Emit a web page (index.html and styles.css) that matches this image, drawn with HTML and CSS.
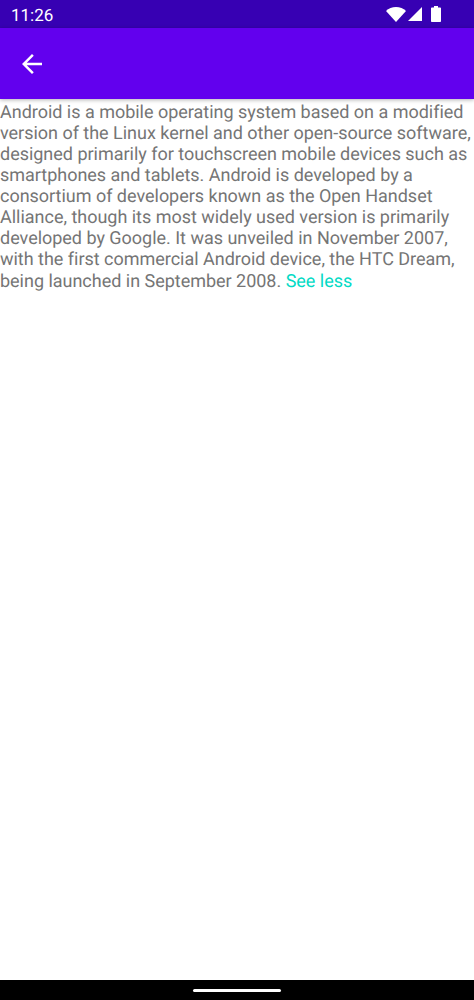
FILE: index.html
```html
<!DOCTYPE html>
<html lang="en">

<head>
    <meta charset="UTF-8">
    <meta name="viewport" content="width=device-width, initial-scale=1.0">
    <title>Read More</title>
    <link rel="stylesheet" href="styles.css">
</head>

<body>
    <div class="status-bar">
        <span class="time">11:26</span>
        <div class="status-icons">
            <svg class="wifi" width="20" height="15" viewBox="0 0 20 15"><path d="M0 4C2.6 1.5 6.1 0 10 0s7.4 1.5 10 4L10 15z" fill="#fff"/></svg>
            <svg class="signal" width="14" height="14" viewBox="0 0 14 14"><path d="M14 0V14H0z" fill="#fff"/></svg>
            <svg class="battery" width="10" height="16" viewBox="0 0 10 16"><path d="M3 0h4v1.5h2.2c.5 0 .8.3.8.8V15.2c0 .5-.3.8-.8.8H.8c-.5 0-.8-.3-.8-.8V2.3c0-.5.3-.8.8-.8H3z" fill="#fff"/></svg>
        </div>
    </div>
    <div class="toolbar">
        <svg class="back" width="30" height="30" viewBox="0 0 24 24"><path d="M20 11H7.8l5.6-5.6L12 4l-8 8 8 8 1.4-1.4L7.8 13H20z" fill="#fff"/></svg>
    </div>
    <div class="content">
        <p class="description">Android is a mobile operating system based on a modified version of the Linux kernel and other open-source software, designed primarily for touchscreen mobile devices such as smartphones and tablets. Android is developed by a consortium of developers known as the Open Handset Alliance, though its most widely used version is primarily developed by Google. It was unveiled in November 2007, with the first commercial Android device, the HTC Dream, being launched in September 2008. <a class="see-less" href="#">See less</a></p>
    </div>
    <div class="nav-bar">
        <div class="home-pill"></div>
    </div>
</body>

</html>
```

FILE: styles.css
```css
body {
    margin: 0;
    height: 1000px;
    display: flex;
    flex-direction: column;
    font-family: Roboto, sans-serif;
    background-color: #fff;
    text-rendering: geometricPrecision;
}

.status-bar {
    height: 28px;
    background-color: #3700b3;
    color: #fff;
    display: flex;
    justify-content: space-between;
    align-items: center;
    padding: 0 33px 0 11px;
}

.time {
    font-size: 17px;
    padding-top: 4px;
}

.status-icons {
    display: flex;
    align-items: center;
    gap: 2px;
}

.status-icons svg {
    display: block;
}

.battery {
    margin-left: 7px;
}

.toolbar {
    height: 71px;
    background-color: #6200ee;
    display: flex;
    align-items: center;
    padding-left: 17px;
    box-shadow: 0 1px 4px rgba(0, 0, 0, 0.3);
}

.content {
    flex: 1;
    padding-top: 2.5px;
}

.description {
    margin: 0;
    font-size: 18px;
    line-height: 21.12px;
    letter-spacing: -0.02px;
    color: #757575;
}

.see-less {
    color: #03dac5;
    text-decoration: none;
}

.nav-bar {
    height: 20px;
    background-color: #000;
    display: flex;
    justify-content: center;
    align-items: center;
}

.home-pill {
    width: 88px;
    height: 3px;
    border-radius: 2px;
    background-color: #fff;
}
```
